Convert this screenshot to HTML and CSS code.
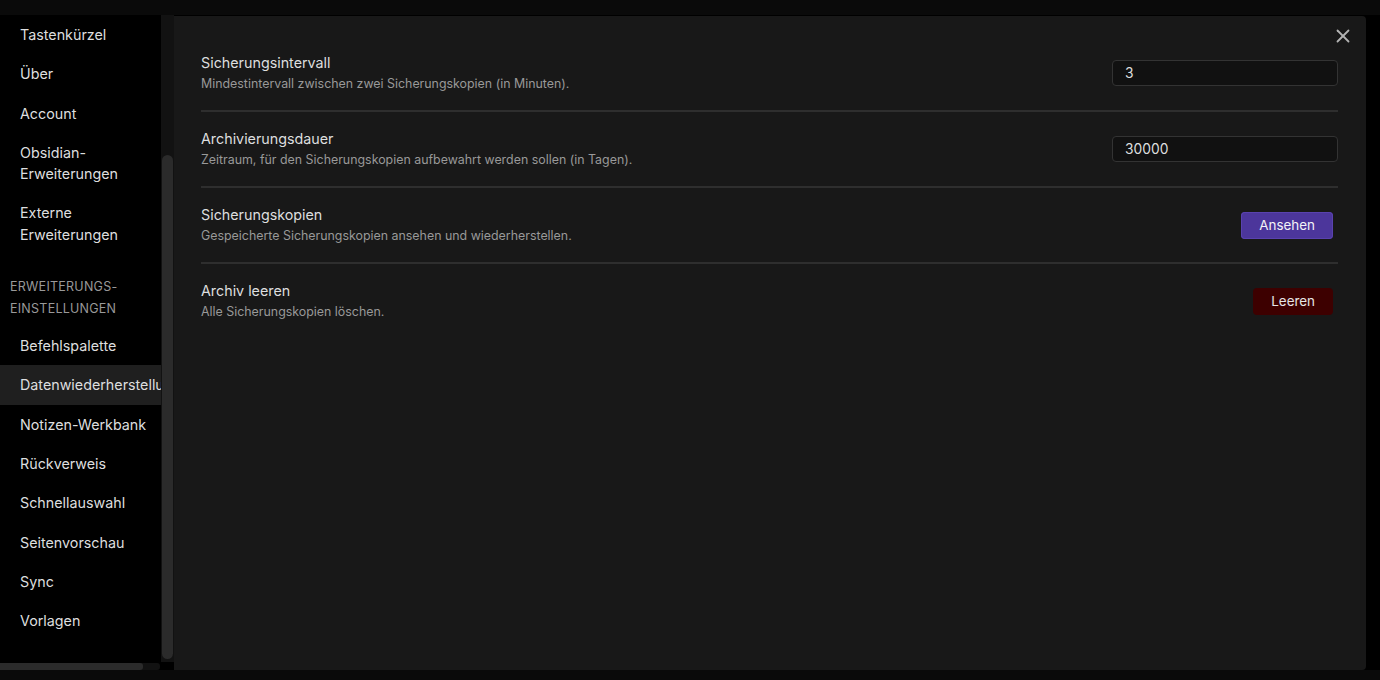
FILE: index.html
```html
<!DOCTYPE html>
<html lang="de">
<head>
    <meta charset="UTF-8">
    <title>Einstellungen – Datenwiederherstellung</title>
    <link rel="stylesheet" href="styles.css">
</head>
<body>
    <div class="topbar"></div>
    <div class="modal">
        <div class="sidebar">
            <div class="sidebar__main">
                <nav class="sidebar__nav">
                    <div class="nav-item">Tastenkürzel</div>
                    <div class="nav-item">Über</div>
                    <div class="nav-item">Account</div>
                    <div class="nav-item">Obsidian-<br>Erweiterungen</div>
                    <div class="nav-item">Externe<br>Erweiterungen</div>
                    <div class="nav-heading">Erweiterungs-<br>einstellungen</div>
                    <div class="nav-item">Befehlspalette</div>
                    <div class="nav-item nav-item--active">Datenwiederherstellung</div>
                    <div class="nav-item">Notizen-Werkbank</div>
                    <div class="nav-item">Rückverweis</div>
                    <div class="nav-item">Schnellauswahl</div>
                    <div class="nav-item">Seitenvorschau</div>
                    <div class="nav-item">Sync</div>
                    <div class="nav-item">Vorlagen</div>
                </nav>
                <div class="vscroll"><div class="vscroll__thumb"></div></div>
            </div>
            <div class="hscroll"><div class="hscroll__track"><div class="hscroll__thumb"></div></div></div>
        </div>
        <main class="panel">
            <button class="panel__close" type="button" title="Schließen">
                <svg viewBox="0 0 14 14" width="14" height="14" aria-hidden="true">
                    <g fill="none" stroke="#b3b3b3" stroke-width="1.8" stroke-linecap="round">
                        <line x1="1.5" y1="1.5" x2="12.5" y2="12.5" />
                        <line x1="12.5" y1="1.5" x2="1.5" y2="12.5" />
                    </g>
                </svg>
            </button>
            <div class="setting">
                <div class="setting__info">
                    <div class="setting__name">Sicherungsintervall</div>
                    <div class="setting__desc">Mindestintervall zwischen zwei Sicherungskopien (in Minuten).</div>
                </div>
                <div class="setting__control"><input class="field" type="text" value="3"></div>
            </div>
            <div class="setting">
                <div class="setting__info">
                    <div class="setting__name">Archivierungsdauer</div>
                    <div class="setting__desc">Zeitraum, für den Sicherungskopien aufbewahrt werden sollen (in Tagen).</div>
                </div>
                <div class="setting__control"><input class="field" type="text" value="30000"></div>
            </div>
            <div class="setting">
                <div class="setting__info">
                    <div class="setting__name">Sicherungskopien</div>
                    <div class="setting__desc">Gespeicherte Sicherungskopien ansehen und wiederherstellen.</div>
                </div>
                <div class="setting__control"><button class="btn btn--cta" type="button">Ansehen</button></div>
            </div>
            <div class="setting">
                <div class="setting__info">
                    <div class="setting__name">Archiv leeren</div>
                    <div class="setting__desc">Alle Sicherungskopien löschen.</div>
                </div>
                <div class="setting__control"><button class="btn btn--warning" type="button">Leeren</button></div>
            </div>
        </main>
    </div>
    <div class="bottombar"></div>
</body>
</html>
```

FILE: styles.css
```css
* {
    border: 0;
    box-sizing: border-box;
    margin: 0;
    padding: 0;
}
:root {
    --bg-outer: hsl(0,0%,4%);
    --bg-side: hsl(0,0%,0%);
    --bg-panel: hsl(0,0%,9.5%);
    --bg-field: hsl(0,0%,6.5%);
    --border: hsl(0,0%,18%);
    --fg: hsl(210,4%,87%);
    --fg-muted: hsl(0,0%,60%);
    --scroll-track: hsl(0,0%,7%);
    --scroll-thumb: hsl(0,0%,17%);
}
body,
button,
input {
    color: var(--fg);
    font-family: Inter, "Noto Sans", sans-serif;
}
body {
    background-color: var(--bg-outer);
    display: flex;
    flex-direction: column;
    width: 1380px;
    height: 680px;
    overflow: hidden;
}
.topbar {
    height: 15px;
    flex: none;
}
.bottombar {
    flex: 1;
}
.modal {
    display: flex;
    height: 655px;
    flex: none;
    background-color: var(--bg-side);
    padding-right: 14px;
}

/* Sidebar */
.sidebar {
    display: flex;
    flex-direction: column;
    width: 174px;
    flex: none;
    background-color: var(--bg-side);
}
.sidebar__main {
    display: flex;
    flex: 1;
    min-height: 0;
}
.sidebar__nav {
    width: 161px;
    flex: none;
    overflow: hidden;
    font-size: 14.3px;
}
.nav-item {
    padding: 9px 0 9px 20px;
    line-height: 21.3px;
    white-space: nowrap;
}
.nav-item--active {
    background-color: hsl(0,0%,12%);
}
.nav-heading {
    color: var(--fg-muted);
    font-size: 12.5px;
    letter-spacing: 0.02em;
    line-height: 22px;
    padding: 22px 0 6px 10px;
    text-transform: uppercase;
}
.vscroll {
    width: 13px;
    flex: none;
    background-color: var(--scroll-track);
    display: flex;
    flex-direction: column;
    padding: 140px 1px 3px 1px;
}
.vscroll__thumb {
    flex: 1;
    background-color: var(--scroll-thumb);
    border-radius: 6px;
}
.hscroll {
    height: 7px;
    flex: none;
    display: flex;
    margin-top: 1px;
}
.hscroll__track {
    width: 160px;
    background-color: var(--scroll-track);
    border-radius: 0 3px 3px 0;
}
.hscroll__thumb {
    width: 143px;
    height: 100%;
    background-color: var(--scroll-thumb);
    border-radius: 0 3px 3px 0;
}

/* Content panel */
.panel {
    position: relative;
    flex: 1;
    height: 654px;
    margin-top: 1px;
    background-color: var(--bg-panel);
    border-radius: 0 4px 4px 0;
    padding: 20px 28px 0 27px;
}
.panel__close {
    background: none;
    cursor: pointer;
    display: block;
    position: absolute;
    top: 13px;
    right: 16px;
    width: 14px;
    height: 14px;
}
.panel__close svg {
    display: block;
}
.setting {
    display: flex;
    align-items: center;
    padding: 16px 0;
    border-top: 2px solid var(--border);
}
.setting:first-of-type {
    border-top: 0;
}
.setting__info {
    flex: 1;
}
.setting__name {
    font-size: 14.3px;
    line-height: 22px;
}
.setting__desc {
    color: var(--fg-muted);
    font-size: 12.4px;
    line-height: 20px;
}
.setting__control {
    display: flex;
    justify-content: flex-end;
}
.field {
    background-color: var(--bg-field);
    border: 1px solid hsl(0,0%,20%);
    border-radius: 4px;
    font-size: 13.8px;
    height: 26px;
    padding: 0 12px;
    width: 226px;
    outline: none;
}
.btn {
    border-radius: 4px;
    cursor: pointer;
    font-size: 13.4px;
    height: 27px;
    margin-right: 5px;
    padding: 0 18px;
}
.btn--cta {
    background-color: hsl(253,48%,41%);
    color: hsl(240,20%,96%);
    box-shadow: 0 0 0 1px hsl(253,45%,47%) inset;
}
.btn--warning {
    background-color: hsl(0,100%,12%);
    color: hsl(0,0%,90%);
}
```
